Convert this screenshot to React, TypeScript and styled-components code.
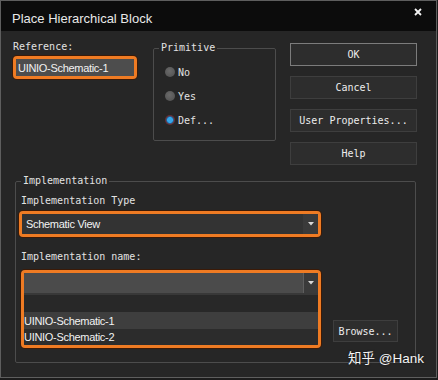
import React from 'react';
import styled, { createGlobalStyle } from 'styled-components';

const mono = `"DejaVu Sans Mono", "Liberation Mono", monospace`;
const sans = `"Liberation Sans", Arial, sans-serif`;

const Global = createGlobalStyle`
  html, body { margin: 0; padding: 0; background: #1c1c1c; }
  * { box-sizing: border-box; }
`;

const Window = styled.div`
  position: relative;
  width: 437px;
  height: 378px;
  border: 1px solid #5e5e5e;
  background: #262626;
  display: flex;
  flex-direction: column;
  overflow: hidden;
`;

const TitleBar = styled.div`
  height: 30px;
  flex: none;
  background: #0c0c0c;
  display: flex;
  justify-content: space-between;
  padding: 0 14px 0 11px;
`;

const Title = styled.span`
  font-family: ${sans};
  font-size: 13px;
  line-height: 30px;
  padding-top: 3px;
  color: #e8e8e8;
`;

const Close = styled.svg`
  margin-top: 7px;
  width: 8px;
  height: 8px;
`;

const Body = styled.div`
  flex: 1;
  display: flex;
  flex-direction: column;
  padding: 10px 0 0 12px;
`;

const TopRow = styled.div`
  display: flex;
  align-items: flex-start;
`;

const LeftCol = styled.div`
  width: 124px;
  display: flex;
  flex-direction: column;
  gap: 3px;
`;

const Label = styled.div<{ $mt?: number }>`
  font-family: ${mono};
  font-size: 10px;
  line-height: 12px;
  color: #e2e2e2;
  white-space: nowrap;
  margin-top: ${(p) => p.$mt ?? 0}px;
`;

const Frame = styled.div<{ $w: number; $h: number; $ml?: number; $mt?: number }>`
  width: ${(p) => p.$w}px;
  height: ${(p) => p.$h}px;
  margin-left: ${(p) => p.$ml ?? 0}px;
  margin-top: ${(p) => p.$mt ?? 0}px;
  border: 3px solid #ef7b23;
  border-radius: 4px;
  box-shadow: inset 0 0 0 1px #6a2e0b, 0 0 0 1px #3b1a07;
  display: flex;
  flex-direction: column;
  overflow: hidden;
  flex: none;
`;

const TextField = styled.div`
  flex: 1;
  background: #4d4d4d;
  font-family: ${sans};
  font-size: 11px;
  letter-spacing: -0.3px;
  color: #f2f2f2;
  display: flex;
  align-items: center;
  padding-left: 2px;
`;

const Group = styled.fieldset<{ $w: number; $h: number; $ml: number; $mt: number; $pt: number }>`
  margin: ${(p) => p.$mt}px 0 0 ${(p) => p.$ml}px;
  width: ${(p) => p.$w}px;
  height: ${(p) => p.$h}px;
  border: 1px solid #4c4c4c;
  border-radius: 2px;
  padding: ${(p) => p.$pt}px 4px 0 5px;
  min-width: 0;
  flex: none;
`;

const Legend = styled.legend`
  font-family: ${mono};
  font-size: 10px;
  line-height: 12px;
  color: #e2e2e2;
  padding: 0 2px;
`;

const RadioRow = styled.div`
  height: 24px;
  display: flex;
  align-items: center;
  gap: 3px;
  padding-left: 6px;
  font-family: ${mono};
  font-size: 10px;
  color: #e2e2e2;
`;

const Radio = styled.span<{ $on?: boolean }>`
  width: 10px;
  height: 10px;
  border-radius: 50%;
  background: ${(p) =>
    p.$on
      ? 'radial-gradient(circle, #36a6ea 0 2.6px, #1f6fa8 3.2px, #5b3440 4.2px, #6e2a2e 5px)'
      : 'radial-gradient(circle at 45% 40%, #6a6a6a, #4e4e4e)'};
`;

const ButtonCol = styled.div`
  margin-left: 14px;
  padding-top: 2px;
  width: 127px;
  display: flex;
  flex-direction: column;
  gap: 10px;
`;

const Button = styled.div<{ $default?: boolean; $w?: number; $h?: number }>`
  width: ${(p) => (p.$w ? `${p.$w}px` : 'auto')};
  height: ${(p) => p.$h ?? 23}px;
  background: #2d2d2d;
  border: 1px solid ${(p) => (p.$default ? '#7c7c7c' : '#3e3e3e')};
  display: flex;
  align-items: center;
  justify-content: center;
  font-family: ${mono};
  font-size: 10px;
  color: #ececec;
  white-space: nowrap;
  flex: none;
`;

const Combo = styled.div<{ $bg: string }>`
  height: 20px;
  flex: none;
  display: flex;
  background: ${(p) => p.$bg};
  font-family: ${sans};
  font-size: 11px;
  letter-spacing: -0.3px;
  color: #f2f2f2;
`;

const ComboText = styled.div`
  flex: 1;
  display: flex;
  align-items: center;
  padding-left: 4px;
`;

const ComboButton = styled.div<{ $sep?: boolean }>`
  width: 15px;
  display: flex;
  align-items: center;
  justify-content: center;
  background: #3a3a3a;
  border-left: 1px solid ${(p) => (p.$sep ? '#5e5e5e' : '#3a3a3a')};
`;

const Gap = styled.div`
  height: 19px;
  flex: none;
  background: #282828;
  border-top: 2px solid #383838;
`;

const Item = styled.div<{ $bg: string; $h: number }>`
  height: ${(p) => p.$h}px;
  flex: none;
  background: ${(p) => p.$bg};
  font-family: ${sans};
  font-size: 11px;
  letter-spacing: -0.3px;
  color: #f2f2f2;
  display: flex;
  align-items: center;
`;

const NameRow = styled.div`
  display: flex;
  align-items: flex-start;
  margin-top: 7px;
`;

const Watermark = styled.div`
  position: absolute;
  right: 12px;
  bottom: 10px;
  font-family: ${sans}, "Noto Sans CJK SC", sans-serif;
  font-size: 13.5px;
  color: #f4f4f4;
  text-shadow: 0 0 2px rgba(0, 0, 0, 0.6);
  white-space: nowrap;
`;

const Arrow = () => (
  <svg width="6" height="4" viewBox="0 0 6 4">
    <polygon points="0,0 6,0 3,3.5" fill="#d8d8d8" />
  </svg>
);

export default function App() {
  return (
    <>
      <Global />
      <Window>
        <TitleBar>
          <Title>Place Hierarchical Block</Title>
          <Close viewBox="0 0 8 8">
            <path d="M1 1 L7 7 M7 1 L1 7" stroke="#f4f4f4" strokeWidth="1.8" />
          </Close>
        </TitleBar>
        <Body>
          <TopRow>
            <LeftCol>
              <Label>Reference:</Label>
              <Frame $w={124} $h={23}>
                <TextField>UINIO-Schematic-1</TextField>
              </Frame>
            </LeftCol>
            <Group $w={123} $h={99} $ml={16} $mt={1} $pt={6}>
              <Legend>Primitive</Legend>
              <RadioRow>
                <Radio />
                No
              </RadioRow>
              <RadioRow>
                <Radio />
                Yes
              </RadioRow>
              <RadioRow>
                <Radio $on />
                Def...
              </RadioRow>
            </Group>
            <ButtonCol>
              <Button $default>OK</Button>
              <Button>Cancel</Button>
              <Button>User Properties...</Button>
              <Button>Help</Button>
            </ButtonCol>
          </TopRow>
          <Group $w={401} $h={188} $ml={2} $mt={10} $pt={8}>
            <Legend>Implementation</Legend>
            <Label>Implementation Type</Label>
            <Frame $w={302} $h={26} $ml={-2} $mt={4}>
              <Combo $bg="#333333" style={{ height: 20 }}>
                <ComboText>Schematic View</ComboText>
                <ComboButton>
                  <Arrow />
                </ComboButton>
              </Combo>
            </Frame>
            <Label $mt={14}>Implementation name:</Label>
            <NameRow>
              <Frame $w={300} $h={78}>
                <Combo $bg="#4b4b4b">
                  <ComboText />
                  <ComboButton $sep>
                    <Arrow />
                  </ComboButton>
                </Combo>
                <Gap />
                <Item $bg="#3e3e3e" $h={17}>UINIO-Schematic-1</Item>
                <Item $bg="#2c2c2c" $h={16}>UINIO-Schematic-2</Item>
              </Frame>
              <Button $w={65} $h={22} style={{ marginLeft: 12, marginTop: 50 }}>
                Browse...
              </Button>
            </NameRow>
          </Group>
          <Watermark>知乎 @Hank</Watermark>
        </Body>
      </Window>
    </>
  );
}
